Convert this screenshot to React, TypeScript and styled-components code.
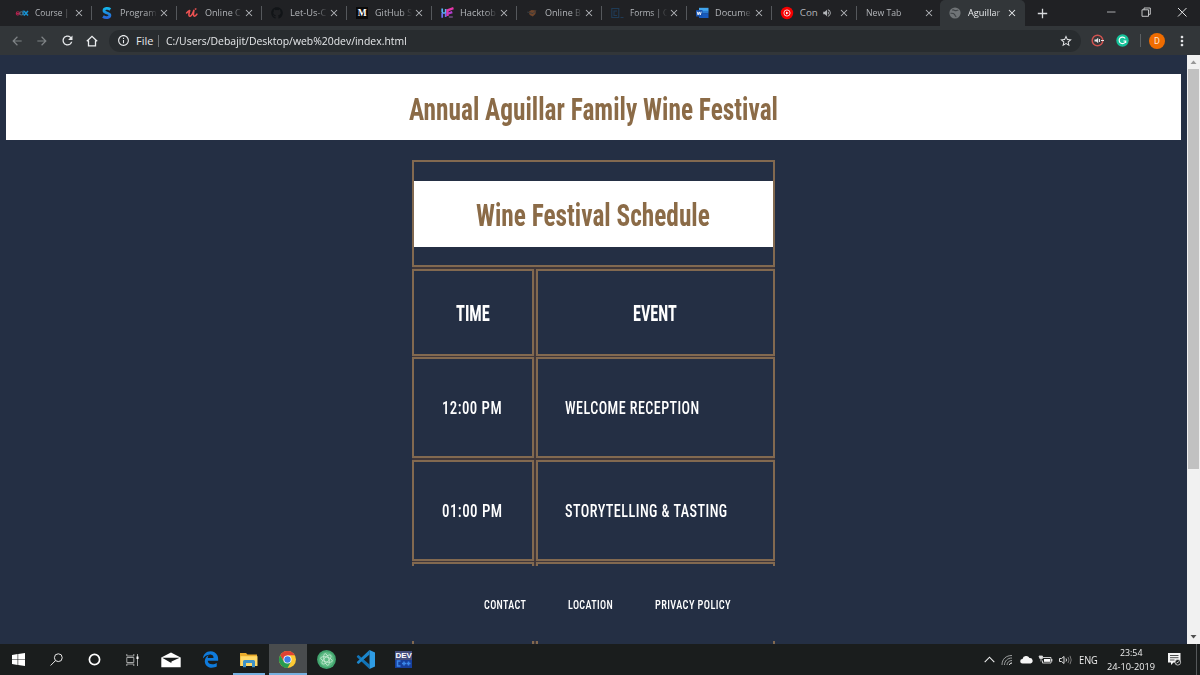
import React, { useLayoutEffect, useRef, useState } from 'react';
import styled, { createGlobalStyle, css } from 'styled-components';
import {
  MdArrowBack, MdArrowForward, MdRefresh, MdInfoOutline, MdStarOutline, MdMoreVert, MdVolumeUp,
} from 'react-icons/md';
import { FaGithub, FaEdgeLegacy } from 'react-icons/fa';

const GlobalStyle = createGlobalStyle`
  * { box-sizing: border-box; }
  body { margin: 0; background: #242f44; overflow: hidden; }
`;

const ui = '"Open Sans", "Noto Sans", sans-serif';
const display = 'Roboto, "Liberation Sans", sans-serif';

/* Text squeezed horizontally so a line takes exactly the given width. */
const FitBox = styled.span<{ $width: number }>`
  display: block;
  flex: none;
  width: ${(p) => p.$width}px;
  white-space: nowrap;
`;
const FitInner = styled.span`
  display: inline-block;
  transform-origin: 0 50%;
`;
function Fit({ width, children }: { width: number; children: React.ReactNode }) {
  const ref = useRef<HTMLSpanElement>(null);
  const [scale, setScale] = useState(1);
  useLayoutEffect(() => {
    if (ref.current) setScale(width / ref.current.offsetWidth);
  }, [width]);
  return (
    <FitBox $width={width}>
      <FitInner ref={ref} style={{ transform: `scaleX(${scale})` }}>{children}</FitInner>
    </FitBox>
  );
}

const Screen = styled.div`
  display: flex;
  flex-direction: column;
  width: 1200px;
  height: 675px;
  overflow: hidden;
  font-family: ${ui};
`;

/* ---------- tab strip ---------- */
const TabStrip = styled.div`
  display: flex;
  flex: none;
  height: 26px;
  padding-left: 7.3px;
  background: #202124;
`;
const Tab = styled.div<{ $active?: boolean; $divider?: boolean }>`
  display: flex;
  align-items: center;
  flex: none;
  width: 85px;
  height: 26px;
  padding: 0 7px 0 9px;
  font-size: 9.8px;
  line-height: 14px;
  color: ${(p) => (p.$active ? '#eceef0' : '#b3b6ba')};
  ${(p) => p.$active && css`
    margin-left: -2px;
    background: #323639;
    border-radius: 5px 5px 0 0;
    font-weight: 500;
  `}
  ${(p) => p.$divider && css`
    background: linear-gradient(#55585c, #55585c) right 6px / 1px 14px no-repeat;
  `}
`;
const Favicon = styled.span`
  display: flex;
  flex: none;
  width: 12px;
  height: 12px;
  margin-right: 6.5px;
  svg { width: 12px; height: 12px; display: block; overflow: visible; }
`;
const TabTitle = styled.span<{ $fade?: boolean }>`
  flex: 1;
  overflow: hidden;
  white-space: nowrap;
  ${(p) => p.$fade && css`
    mask-image: linear-gradient(90deg, #000 68%, transparent 98%);
  `}
`;
const Mute = styled.span`
  display: flex;
  margin: 0 6px 0 1px;
  svg { width: 10px; height: 10px; }
`;
const CloseSlot = styled.span`
  display: flex;
  justify-content: center;
  flex: none;
  width: 12px;
  svg { width: 8px; height: 8px; display: block; }
`;
const NewTabButton = styled.div`
  display: flex;
  align-items: center;
  margin-left: 12px;
  svg { width: 11px; height: 11px; }
`;
const WindowButtons = styled.div`
  display: flex;
  align-items: center;
  gap: 25.5px;
  margin-left: auto;
  padding: 0 13.5px 3px 0;
  svg { width: 10px; height: 10px; display: block; overflow: visible; }
`;

const Cross = ({ color = '#b4b7bb' }: { color?: string }) => (
  <svg viewBox="0 0 8 8"><path d="M1 1l6 6M7 1L1 7" stroke={color} strokeWidth="1.05" fill="none" /></svg>
);

const EdxIcon = () => (
  <svg viewBox="0 0 12 12" fill="none">
    <circle cx="1.9" cy="6.4" r="1.6" stroke="#b3204d" strokeWidth="1.1" /><path d="M.4 6.5h3" stroke="#b3204d" />
    <circle cx="5.4" cy="6.4" r="1.6" stroke="#5c6974" strokeWidth="1.1" /><path d="M7.2 3.4v4.8" stroke="#1a87c4" strokeWidth="1.2" />
    <path d="M8 3.9l4 4.6M12 3.9L8 8.5" stroke="#1794d4" strokeWidth="1.5" />
  </svg>
);
const SIcon = () => (
  <svg viewBox="0 0 12 12" fill="none">
    <defs><linearGradient id="sg" x1="0" y1="0" x2="0" y2="1"><stop stopColor="#14b2ea" /><stop offset="1" stopColor="#2767d8" /></linearGradient></defs>
    <path d="M9.3 2.5C7 .8 3.2 1.1 3 3.6c-.2 2.7 6 2 5.9 4.7C8.8 10.9 4.6 11.4 2 9.5" stroke="url(#sg)" strokeWidth="2.8" />
  </svg>
);
const UdemyIcon = () => (
  <svg viewBox="0 0 12 12" fill="none">
    <path d="M.6 6C2.200 4.200 3.700 3.600 3.700 3.600c-.3 1.500-1.700 5.400 0 5.600C6 9.300 7.600 4 7.900 3.400 7.500 5.800 7 9 8.300 9.200c1 0 2-1 2.600-2" stroke="#ec5252" strokeWidth="1.600" strokeLinecap="round" strokeLinejoin="round" />
    <path d="M8.800 2.400l1.600-.8" stroke="#ec5252" strokeWidth="1.200" />
  </svg>
);
const MediumBox = styled.span`
  display: flex;
  align-items: center;
  justify-content: center;
  width: 12px;
  height: 12px;
  background: #0a0a0a;
  color: #fff;
  font: bold 9.5px/12px "Liberation Serif", serif;
`;
const HacktoberIcon = () => (
  <svg viewBox="0 0 12 12" fill="none">
    <path d="M1.200 1.500v4M1 6h3.500M4.700 2v4" stroke="#5bb2f3" strokeWidth="1.700" />
    <path d="M1.200 6v4.800M4.700 6v4" stroke="#6c6ff0" strokeWidth="1.700" />
    <path d="M6.500 9V3.300L12.500 1.200" stroke="#e336a8" strokeWidth="2.300" />
    <path d="M6.500 6.800l4.800-1.700" stroke="#b63bd0" strokeWidth="2.200" />
    <path d="M7.800 10h4" stroke="#86599c" strokeWidth="1.200" />
  </svg>
);
const BrownIcon = () => (
  <svg viewBox="0 0 12 12"><path d="M2.500 5l3-2 4.500.6-.6 3.300-2.600 2.600-3-1.500z" fill="#6e452b" /><path d="M1 5l6 1.500 3-3" stroke="#34393e" fill="none" /></svg>
);
const FormsIcon = () => (
  <svg viewBox="0 0 12 12" fill="none" stroke="#1f3b56" strokeWidth="1.100"><path d="M.8 1.500h7v9h-7zM6 4H3v4.500h3M9.500 10.500h3" /></svg>
);
const WordIcon = () => (
  <svg viewBox="0 0 12 12">
    <path d="M3 .8h9.500v3.500H3z" fill="#41a5ee" /><path d="M3 3.800h9.500v2.700H3z" fill="#2b7cd3" /><path d="M3 6.300h9.500v4.700H3z" fill="#185abd" />
    <rect y="3" width="6.500" height="6.500" rx=".6" fill="#1550ad" />
    <path d="M1.200 4.700l.9 3.200 1.100-3 1.100 3 .9-3.200" stroke="#fff" strokeWidth=".9" fill="none" />
  </svg>
);
const YtMusicIcon = () => (
  <svg viewBox="0 0 12 12"><circle cx="6" cy="6" r="6.200" fill="#f60000" /><circle cx="6" cy="6" r="3.100" fill="none" stroke="#fff" strokeWidth=".8" /><path d="M5 4.400v3.200L7.700 6z" fill="#fff" /></svg>
);
const GlobeIcon = () => (
  <svg viewBox="0 0 12 12"><circle cx="6" cy="6" r="5.600" fill="#707477" /><path d="M3.200 3.200c1.500-1.200 2.200.8 4 .4 1 0 1.300-.8 2.200-.2M1.500 6.300c2-.2 3.200 0 4 1 .8 1 .2 2 1.800 2.300" stroke="#3d4144" strokeWidth="1.100" fill="none" /></svg>
);

const tabs: { title: string; width: number; icon?: React.ReactNode; mute?: boolean }[] = [
  { title: 'Course |', width: 34, icon: <EdxIcon /> },
  { title: 'Program', width: 37, icon: <SIcon /> },
  { title: 'Online C', width: 36, icon: <UdemyIcon /> },
  { title: 'Let-Us-C', width: 36, icon: <FaGithub color="#111417" /> },
  { title: 'GitHub S', width: 37, icon: <MediumBox>M</MediumBox> },
  { title: 'Hacktob', width: 36, icon: <HacktoberIcon /> },
  { title: 'Online B', width: 36, icon: <BrownIcon /> },
  { title: 'Forms | C', width: 38, icon: <FormsIcon /> },
  { title: 'Docume', width: 35.5, icon: <WordIcon /> },
  { title: 'Con', width: 18, icon: <YtMusicIcon />, mute: true },
  { title: 'New Tab', width: 35.5 },
];

/* ---------- toolbar ---------- */
const Toolbar = styled.div`
  display: flex;
  align-items: center;
  flex: none;
  height: 29px;
  padding-left: 10px;
  background: #323639;
  color: #e6e8ea;
  svg { display: block; flex: none; }
`;
const NavButtons = styled.div`
  display: flex;
  align-items: center;
  flex: none;
  gap: 11px;
  width: 99px;
`;
const AddressBar = styled.div`
  display: flex;
  align-items: center;
  flex: none;
  width: 972px;
  height: 22px;
  padding: 0 8px;
  border-radius: 11px;
  background: #282c2f;
  font-size: 11px;
  line-height: 16px;
`;
const SchemeLabel = styled.div`
  display: flex;
  padding-right: 5px;
  margin: 0 7px 0 6px;
  border-right: 1px solid #6b6f72;
  line-height: 12px;
`;
const StarSlot = styled.div`margin-left: auto;`;
const Extensions = styled.div`
  display: flex;
  align-items: center;
  flex: none;
  gap: 12px;
  margin-left: 10px;
`;
const Profile = styled.div`
  display: flex;
  align-items: center;
  gap: 8.5px;
  padding-left: 9px;
  margin-left: -1px;
  background: linear-gradient(#5c6063, #5c6063) left center / 1px 13px no-repeat;
`;
const Avatar = styled.span`
  display: flex;
  align-items: center;
  justify-content: center;
  width: 16px;
  height: 16px;
  border-radius: 50%;
  background: #ef6c00;
  color: #ffe3cc;
  font: 9px/16px Roboto, sans-serif;
`;

/* ---------- page ---------- */
const Viewport = styled.div`
  display: flex;
  position: relative;
  height: 589px;
  flex: none;
  background: #242f44;
`;
const Page = styled.main`
  width: 1187px;
  height: 589px;
  padding: 19px 6.5px 0 6px;
  overflow: hidden;
  font-family: ${display};
`;
const Heading = styled.h1`
  display: flex;
  justify-content: center;
  align-items: center;
  height: 66px;
  margin: 0;
  padding-top: 3px;
  background: #fff;
  color: #8b6b47;
  font: bold 32px/40px ${display};
  font-stretch: 75%;
`;
const Schedule = styled.div`
  display: grid;
  grid-template-columns: 122px 239px;
  grid-template-rows: 107px 87px 101px 101px 101px;
  gap: 1.5px;
  width: 362.5px;
  margin: 20px auto 0;
  background: #40373a;
`;
const Cell = styled.div<{ $kind: 'caption' | 'head' | 'body' }>`
  display: flex;
  flex-direction: column;
  justify-content: center;
  border: 2px solid #826950;
  background: #242f44;
  color: #fff;
  ${(p) => p.$kind === 'caption' && css`grid-column: 1 / -1;`}
  ${(p) => p.$kind === 'head' && css`
    align-items: center;
    padding-top: 2px;
    font: bold 22.5px/28px ${display};
    font-stretch: 75%;
  `}
  ${(p) => p.$kind === 'body' && css`
    padding: 1px 0 0 27.5px;
    font: 500 19px/24px ${display};
    font-stretch: 75%;
    letter-spacing: 0.6px;
  `}
`;
const Footer = styled.footer`
  position: absolute;
  left: 0;
  bottom: 3px;
  display: flex;
  gap: 42px;
  align-items: center;
  width: 1187px;
  height: 75px;
  padding: 1px 0 0 484px;
  background: #242f44;
  color: #fff;
  font: 500 13.5px/20px ${display};
  font-stretch: 75%;
  letter-spacing: 0.5px;
`;
const Scrollbar = styled.div`
  display: flex;
  flex-direction: column;
  align-items: center;
  width: 13px;
  background: #f1f1f1;
  svg { width: 7px; height: 4px; display: block; margin: 5px 0; }
`;
const Thumb = styled.div`
  width: 10.5px;
  height: 400px;
  margin-bottom: auto;
  background: #c1c1c1;
`;

/* ---------- taskbar ---------- */
const Taskbar = styled.div`
  display: flex;
  flex: none;
  height: 31px;
  background: #1a1d1d;
  color: #eee;
`;
const Task = styled.div<{ $width: number; $open?: boolean; $active?: boolean }>`
  display: flex;
  align-items: center;
  justify-content: center;
  width: ${(p) => p.$width}px;
  ${(p) => p.$open && css`
    background: linear-gradient(#76b0df, #76b0df) center bottom / ${p.$active ? '100%' : '32px'} 2px no-repeat ${p.$active ? '#494c4e' : 'transparent'};
  `}
  svg { display: block; overflow: visible; }
`;
const DevBox = styled.span`
  display: flex;
  flex-direction: column;
  align-items: center;
  width: 17px;
  height: 17px;
  background: linear-gradient(#444d7c 0 50%, #173f9c 50%);
  color: #fff;
  font: bold 8px/9px "Liberation Sans", sans-serif;
`;
const Tray = styled.div`
  display: flex;
  align-items: center;
  margin-left: auto;
  svg { display: block; flex: none; overflow: visible; }
`;
const TrayIcons = styled.div`
  display: flex;
  align-items: center;
  gap: 6.5px;
  margin-right: 8px;
`;
const Lang = styled.div`
  margin-right: 9px;
  font-size: 10px;
`;
const Clock = styled.div`
  display: flex;
  flex-direction: column;
  align-items: center;
  width: 49px;
  margin-right: 13px;
  font-size: 9.6px;
  line-height: 14px;
`;
const ShowDesktop = styled.div`
  width: 4px;
  height: 31px;
  margin-left: 15px;
  border-left: 1px solid #55585a;
`;

export default function App() {
  return (
    <Screen>
      <GlobalStyle />
      <TabStrip>
        {tabs.map((t, i) => (
          <Tab key={t.title} $divider={i < 10}>
            {t.icon && <Favicon>{t.icon}</Favicon>}
            <TabTitle $fade={!!t.icon && !t.mute}><Fit width={t.width}>{t.title}</Fit></TabTitle>
            {t.mute && <Mute><MdVolumeUp /></Mute>}
            <CloseSlot><Cross /></CloseSlot>
          </Tab>
        ))}
        <Tab $active>
          <Favicon><GlobeIcon /></Favicon>
          <TabTitle $fade><Fit width={32}>Aguillar</Fit></TabTitle>
          <CloseSlot><Cross color="#eceef0" /></CloseSlot>
        </Tab>
        <NewTabButton>
          <svg viewBox="0 0 11 11"><path d="M5.500 .8v9.400M.8 5.500h9.400" stroke="#d8dadd" strokeWidth="1.300" /></svg>
        </NewTabButton>
        <WindowButtons>
          <svg viewBox="0 0 10 10"><path d="M1 5h8.500" stroke="#a9abad" strokeWidth="1" /></svg>
          <svg viewBox="0 0 10 10" fill="none" stroke="#d4d5d6" strokeWidth=".9"><path d="M1 2.800h6.500v6.500H1zM3 2.800V1h6.300v6.300H7.500" /></svg>
          <svg viewBox="0 0 10 10"><path d="M1 1l8.500 8.500M9.500 1L1 9.500" stroke="#e4e5e6" strokeWidth="1" /></svg>
        </WindowButtons>
      </TabStrip>

      <Toolbar>
        <NavButtons>
          <MdArrowBack size={14} color="#7f8386" />
          <MdArrowForward size={14} color="#7f8386" />
          <MdRefresh size={15} />
          <svg width="12" height="12" viewBox="0 0 12 12" fill="none" stroke="#eceef0" strokeWidth="1.300"><path d="M.8 6.300L6 1.300l5.200 5M2.500 5.500v5.300h7V5.500" /></svg>
        </NavButtons>
        <AddressBar>
          <MdInfoOutline size={13} />
          <SchemeLabel><Fit width={17}>File</Fit></SchemeLabel>
          <Fit width={240.5}>C:/Users/Debajit/Desktop/web%20dev/index.html</Fit>
          <StarSlot><MdStarOutline size={14} /></StarSlot>
        </AddressBar>
        <Extensions>
          <svg width="13" height="13" viewBox="0 0 13 13">
            <circle cx="6.500" cy="6.500" r="5.300" fill="#34373a" stroke="#cf5350" strokeWidth="1.500" />
            <path d="M3.500 5.500h1.700l2-1.700v5.400l-2-1.700H3.500z" fill="#e8e8e8" /><path d="M8.500 5v3M10 6.500h3" stroke="#e8e8e8" strokeWidth="1.100" />
          </svg>
          <svg width="13" height="13" viewBox="0 0 13 13">
            <circle cx="6.500" cy="6.500" r="6.200" fill="#15c39a" />
            <path d="M9.200 4.500A3.300 3.300 0 1 0 9.700 7H7.400M9.700 7v2" fill="none" stroke="#fff" strokeWidth="1.200" />
          </svg>
          <Profile>
            <Avatar>D</Avatar>
            <MdMoreVert size={16} />
          </Profile>
        </Extensions>
      </Toolbar>

      <Viewport>
        <Page>
          <Heading><Fit width={369}>Annual Aguillar Family Wine Festival</Fit></Heading>
          <Schedule>
            <Cell $kind="caption"><Heading><Fit width={234}>Wine Festival Schedule</Fit></Heading></Cell>
            <Cell $kind="head"><Fit width={33.5}>TIME</Fit></Cell>
            <Cell $kind="head"><Fit width={44}>EVENT</Fit></Cell>
            <Cell $kind="body"><Fit width={60}>12:00 PM</Fit></Cell>
            <Cell $kind="body"><Fit width={135}>WELCOME RECEPTION</Fit></Cell>
            <Cell $kind="body"><Fit width={60.5}>01:00 PM</Fit></Cell>
            <Cell $kind="body"><Fit width={163}>STORYTELLING &amp; TASTING</Fit></Cell>
            <Cell $kind="body" />
            <Cell $kind="body" />
          </Schedule>
        </Page>
        <Footer>
          <Fit width={42}>CONTACT</Fit>
          <Fit width={45}>LOCATION</Fit>
          <Fit width={76}>PRIVACY POLICY</Fit>
        </Footer>
        <Scrollbar>
          <svg viewBox="0 0 7 4"><path d="M.5 4L3.500 .5l3 3.500z" fill="#989898" /></svg>
          <Thumb />
          <svg viewBox="0 0 7 4"><path d="M.5 0l3 3.500 3-3.500z" fill="#505050" /></svg>
        </Scrollbar>
      </Viewport>

      <Taskbar>
        <Task $width={37.5}>
          <svg width="13" height="13" viewBox="0 0 13 13" fill="#fff"><path d="M0 1.900l5.600-.8v5.100H0zM6.200 1L13 0v6.200H6.200zM0 6.800h5.600v5.100L0 11.100zM6.200 6.800H13V13l-6.800-1z" /></svg>
        </Task>
        <Task $width={37.5}>
          <svg width="13" height="13" viewBox="0 0 13 13" fill="none" stroke="#e8e8e8"><circle cx="8.300" cy="4.700" r="3.900" /><path d="M5.500 7.600L.6 12.500" /></svg>
        </Task>
        <Task $width={38}>
          <svg width="13" height="13" viewBox="0 0 13 13" fill="none" stroke="#fff" strokeWidth="1.700"><circle cx="6.500" cy="6.500" r="5.100" /></svg>
        </Task>
        <Task $width={38.5}>
          <svg width="13" height="12" viewBox="0 0 13 12" fill="none" stroke="#b4b6b6" strokeWidth=".9"><path d="M.8 0v2h7V0M.8 12v-2h7v2M.8 3.500h7v5h-7zM11.500 0v12" /><path d="M11.500 2.500v2.500" stroke="#fff" strokeWidth="2" /></svg>
        </Task>
        <Task $width={39}>
          <svg width="20" height="16" viewBox="0 0 20 16"><path d="M.3 5.500L10 .6l9.700 4.900v9.700H.3z" fill="#fff" /><path d="M1.200 5.800h17.500L10.500 9.500l-.2 1.600 3 1.500-4.800-2.600z" fill="#1a1d1d" /></svg>
        </Task>
        <Task $width={39}><FaEdgeLegacy size={17} color="#0f7bdc" /></Task>
        <Task $width={39} $open>
          <svg width="18" height="16" viewBox="0 0 18 16"><path d="M0 1h6l1.500 1.500H17V14H0z" fill="#e9ab2b" /><path d="M.5 4.200h17V14H.500z" fill="#ffd968" /><path d="M3 15.300V9.500q0-1.500 1.500-1.500h9q1.500 0 1.500 1.500v5.800h-3V11H6v4.300z" fill="#3f92c8" /></svg>
        </Task>
        <Task $width={38.5} $open $active>
          <svg width="17" height="17" viewBox="0 0 18 18">
            <circle cx="9" cy="9" r="9" fill="#fcc934" />
            <path d="M1.200 4.500A9 9 0 0 1 16.800 4.500H9L5.100 11.200z" fill="#e04234" />
            <path d="M1.200 4.500A9 9 0 0 0 9 18l3.900-6.800H5.100z" fill="#279b50" />
            <circle cx="9" cy="9" r="4.300" fill="#fff" /><circle cx="9" cy="9" r="3.400" fill="#3f7ee8" />
          </svg>
        </Task>
        <Task $width={38.5}>
          <svg width="19" height="19" viewBox="0 0 19 19"><circle cx="9.500" cy="9.500" r="9.400" fill="#42a56e" /><circle cx="9.500" cy="9.500" r="7.500" fill="#5ebb85" />
            <g fill="none" stroke="#c8ebd5" strokeWidth=".8"><ellipse cx="9.500" cy="9.500" rx="2.400" ry="6" transform="rotate(-15 9.500 9.500)" /><ellipse cx="9.500" cy="9.500" rx="2.400" ry="6" transform="rotate(45 9.500 9.500)" /><ellipse cx="9.500" cy="9.500" rx="2.400" ry="6" transform="rotate(105 9.500 9.500)" /></g>
          </svg>
        </Task>
        <Task $width={39}>
          <svg width="19" height="19" viewBox="0 0 19 19"><path d="M1 6l1.500-1 11 9.500V19L.8 7z" fill="#1274b8" /><path d="M1 13l1.500 1 11-9.500V0L.8 12z" fill="#1b86cc" /><path d="M13.500 0L19 2.500v14L13.500 19z" fill="#2f9ce4" /></svg>
        </Task>
        <Task $width={38}>
          <DevBox>
            <Fit width={16}>DEV</Fit>
            <svg width="15" height="7" viewBox="0 0 15 7" fill="none" stroke="#3b86e8" strokeWidth="1.600"><path d="M4.500 1H1.500v5h3M6 3.500h4M8 1.500v4M10.500 3.500h4M12.500 1.500v4" /></svg>
          </DevBox>
        </Task>
        <Tray>
          <TrayIcons>
            <svg width="11" height="7" viewBox="0 0 11 7" fill="none" stroke="#eee" strokeWidth="1.100"><path d="M.7 6.200l4.800-5 4.800 5" /></svg>
            <svg width="12" height="12" viewBox="0 0 12 12" fill="none" stroke="#9b9d9d"><path d="M1 11C1 5 5 1.500 11 1.500M3.500 11C3.500 7 6.500 4 11 4M6 11c0-2.500 2-4.500 5-4.500" /><path d="M8.500 11c0-1.300 1-2 2.500-2" stroke="#fff" /></svg>
            <svg width="13" height="9" viewBox="0 0 13 9"><path d="M2.500 8.500a2.300 2.300 0 0 1 0-4.600A3.800 3.800 0 0 1 9.500 3a2.800 2.800 0 0 1 1 5.500z" fill="#f5f5f5" /></svg>
            <svg width="13" height="9" viewBox="0 0 13 9"><path d="M4 2.500h8v5.500H3.500V5.500" fill="none" stroke="#ddd" strokeWidth=".9" /><path d="M5 4h6v2.800H5z" fill="#fff" /><path d="M12.800 4v2.500" stroke="#fff" /><path d="M0 1h3.500v2.500H.8zM2 4v2.500" fill="#ddd" stroke="#ddd" strokeWidth=".8" /></svg>
            <svg width="12" height="10" viewBox="0 0 12 10" fill="none" stroke="#ddd"><path d="M.5 3.500h2l2.500-2v7L2.500 6.500h-2z" /><path d="M7 3.500q1 1.500 0 3" /><path d="M9 2q2 3 0 6M11 .8q2.500 4.200 0 8.400" stroke="#777" /></svg>
          </TrayIcons>
          <Lang><Fit width={18.5}>ENG</Fit></Lang>
          <Clock><Fit width={22}>23:54</Fit><Fit width={48}>24-10-2019</Fit></Clock>
          <svg width="13" height="13" viewBox="0 0 13 13"><path d="M0 0h12.500v9.500H5.500L3 12V9.500H0z" fill="#f3f3f3" /><path d="M2 2.500h8.500M2 4.700h8.500M2 7h4.500" stroke="#3a3d3d" strokeWidth=".9" /><circle cx="9.800" cy="9.300" r="2.800" fill="#1a1d1d" stroke="#ddd" strokeWidth=".8" /><path d="M8.300 10.300l3-2" stroke="#ddd" strokeWidth=".8" /></svg>
          <ShowDesktop />
        </Tray>
      </Taskbar>
    </Screen>
  );
}
